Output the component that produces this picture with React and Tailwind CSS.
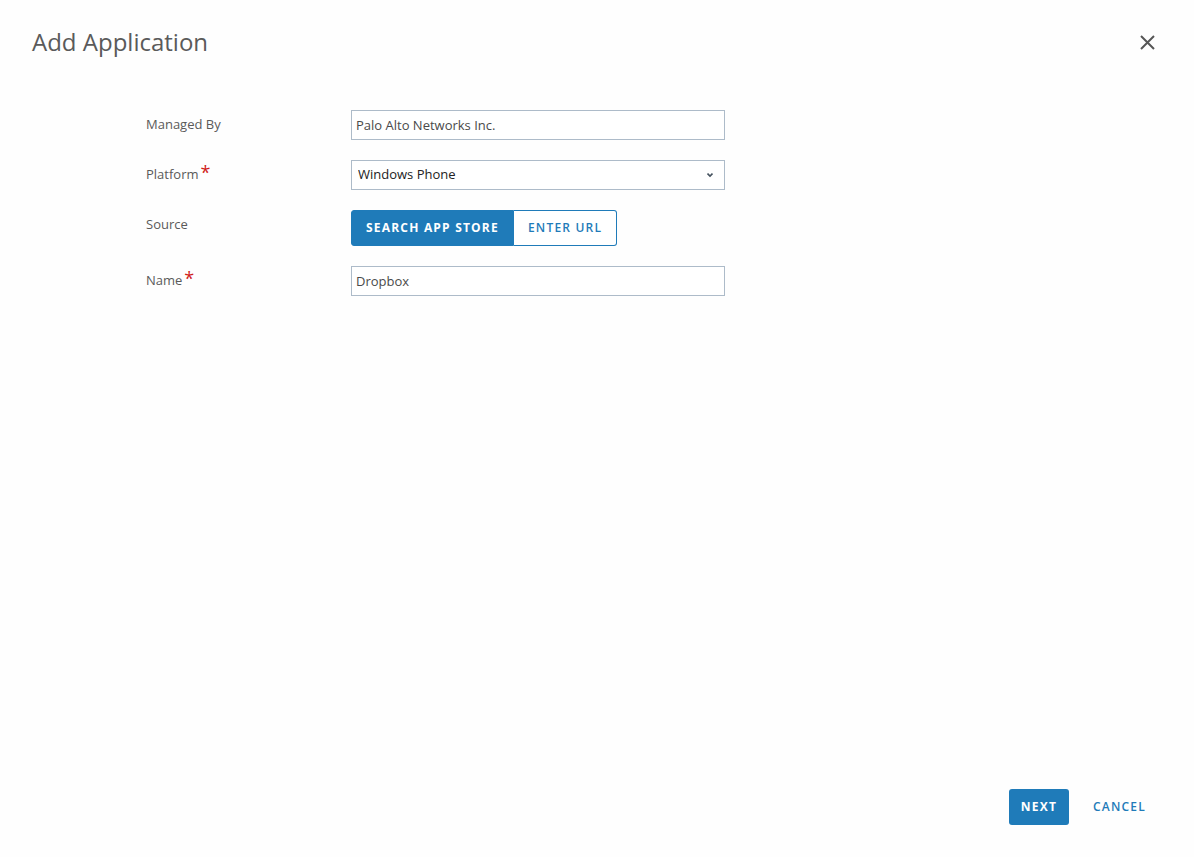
import React, { useState } from "react";

const platforms = ["Windows Phone", "Android", "Apple iOS", "Windows Desktop"];

const sources = [
  { id: "store", label: "Search App Store" },
  { id: "url", label: "Enter URL" },
];

const FormRow = ({ label, htmlFor, required, children }) => (
  <div className="flex items-start">
    <label
      htmlFor={htmlFor}
      className="w-[205px] shrink-0 pt-1 text-[13px] leading-5 text-[#5a5a5a]"
    >
      {label}
      {required && (
        <span className="ml-0.5 text-lg leading-4 text-[#d0201a]">*</span>
      )}
    </label>
    <div className="flex min-w-0 flex-1">{children}</div>
  </div>
);

const TextField = (props) => (
  <input
    type="text"
    className="h-[30px] w-full border border-[#adbbc9] bg-white px-1 text-[13px] text-[#4a4a4a] outline-none focus:border-[#1f7bb9]"
    {...props}
  />
);

const App = () => {
  const [managedBy, setManagedBy] = useState("Palo Alto Networks Inc.");
  const [platform, setPlatform] = useState("Windows Phone");
  const [source, setSource] = useState("store");
  const [name, setName] = useState("Dropbox");

  return (
    <div className="flex min-h-screen flex-col bg-[#fefefe] font-['Open_Sans',sans-serif]">
      {/* Header */}
      <header className="flex items-center justify-between pt-6 pr-[35px] pl-8">
        <h1 className="text-2xl leading-9 text-[#5a5a5a]">Add Application</h1>
        <button type="button" aria-label="Close" className="p-1 text-[#565656]">
          <svg width="15" height="15" viewBox="0 0 15 15" fill="none">
            <path d="M1 1l13 13M14 1L1 14" stroke="currentColor" strokeWidth="2" />
          </svg>
        </button>
      </header>

      {/* Form */}
      <form className="ml-[146px] flex max-w-[579px] flex-1 flex-col gap-5 pt-[50px]">
        <FormRow label="Managed By" htmlFor="managed-by">
          <TextField
            id="managed-by"
            value={managedBy}
            onChange={(e) => setManagedBy(e.target.value)}
          />
        </FormRow>

        <FormRow label="Platform" htmlFor="platform" required>
          <div className="relative w-full">
            <select
              id="platform"
              value={platform}
              onChange={(e) => setPlatform(e.target.value)}
              className="block h-[30px] w-full appearance-none border border-[#adbbc9] bg-white px-1.5 text-[13px] text-[#222222] outline-none focus:border-[#1f7bb9]"
            >
              {platforms.map((p) => (
                <option key={p}>{p}</option>
              ))}
            </select>
            <svg
              className="pointer-events-none absolute top-3 right-3 text-[#45525f]"
              width="6"
              height="6"
              viewBox="0 0 6 6"
              fill="none"
            >
              <path d="M0.5 1.5L3 4L5.5 1.5" stroke="currentColor" strokeWidth="1.6" />
            </svg>
          </div>
        </FormRow>

        <FormRow label="Source" htmlFor="source-store">
          {sources.map((s) => (
            <button
              key={s.id}
              id={`source-${s.id}`}
              type="button"
              aria-pressed={source === s.id}
              onClick={() => setSource(s.id)}
              className={`h-9 border border-[#1f7bb9] text-xs tracking-widest uppercase first:rounded-l-[3px] last:rounded-r-[3px] last:border-l-0 ${
                source === s.id
                  ? "bg-[#1f7bb9] px-3.5 font-bold text-white"
                  : "bg-white px-3.5 font-semibold text-[#1f7bb9]"
              }`}
            >
              {s.label}
            </button>
          ))}
        </FormRow>

        <FormRow label="Name" htmlFor="name" required>
          <TextField
            id="name"
            value={name}
            onChange={(e) => setName(e.target.value)}
          />
        </FormRow>
      </form>

      {/* Footer */}
      <footer className="flex justify-end gap-3 pr-9 pb-8">
        <button
          type="button"
          className="h-9 rounded-[3px] bg-[#1f7bb9] px-3 text-xs font-bold tracking-widest text-white uppercase"
        >
          Next
        </button>
        <button
          type="button"
          className="h-9 px-3 text-xs font-semibold tracking-widest text-[#1f7bb9] uppercase"
        >
          Cancel
        </button>
      </footer>
    </div>
  );
};

export default App;
